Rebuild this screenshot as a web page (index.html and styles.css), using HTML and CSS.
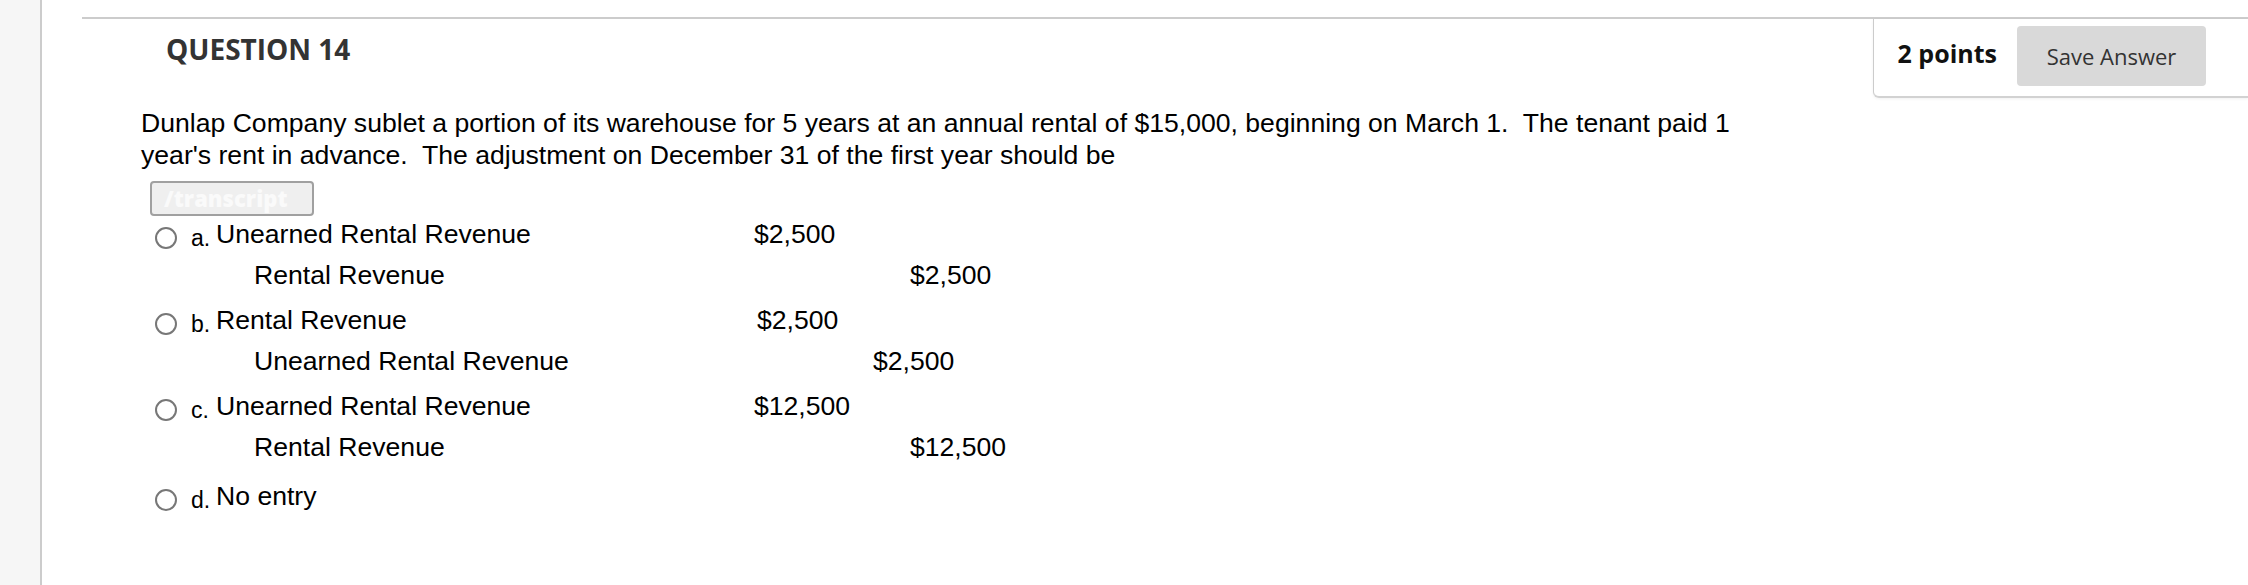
FILE: index.html
```html
<!DOCTYPE html>
<html lang="en">
<head>
<meta charset="utf-8">
<title>Question 14</title>
<link rel="stylesheet" href="styles.css">
</head>
<body>
<div class="page">
  <aside class="sidebar"></aside>
  <main class="main">
    <section class="question">
      <header class="q-head">
        <h2 class="q-title">QUESTION 14</h2>
        <div class="q-meta">
          <span class="points">2 points</span>
          <button class="save" type="button">Save Answer</button>
        </div>
      </header>
      <div class="q-body">
        <p class="q-text">Dunlap Company sublet a portion of its warehouse for 5 years at an annual rental of $15,000, beginning on March 1.&nbsp; The tenant paid 1<br>year's rent in advance.&nbsp; The adjustment on December 31 of the first year should be</p>
        <div class="transcript">/transcript</div>
        <ul class="options">
          <li class="option">
            <span class="radio"></span>
            <span class="letter">a.</span>
            <div class="entry">
              <div class="line dr"><span>Unearned Rental Revenue</span><span>$2,500</span></div>
              <div class="line cr"><span>Rental Revenue</span><span>$2,500</span></div>
            </div>
          </li>
          <li class="option option-b">
            <span class="radio"></span>
            <span class="letter">b.</span>
            <div class="entry">
              <div class="line dr"><span>Rental Revenue</span><span>$2,500</span></div>
              <div class="line cr"><span>Unearned Rental Revenue</span><span>$2,500</span></div>
            </div>
          </li>
          <li class="option">
            <span class="radio"></span>
            <span class="letter">c.</span>
            <div class="entry">
              <div class="line dr"><span>Unearned Rental Revenue</span><span>$12,500</span></div>
              <div class="line cr"><span>Rental Revenue</span><span>$12,500</span></div>
            </div>
          </li>
          <li class="option option-d">
            <span class="radio"></span>
            <span class="letter">d.</span>
            <div class="entry">
              <div class="line"><span>No entry</span></div>
            </div>
          </li>
        </ul>
      </div>
    </section>
  </main>
</div>
</body>
</html>
```

FILE: styles.css
```css
html, body {
  margin: 0;
  padding: 0;
  background: #ffffff;
}

.page {
  display: flex;
  min-height: 585px;
}

.sidebar {
  flex: 0 0 40px;
  background: #f6f6f6;
  border-right: 2px solid #cccccc;
}

.main {
  flex: 1;
  min-width: 0;
}

.question {
  margin: 17px 0 0 40px;
  border-top: 2px solid #cccccc;
}

.q-head {
  display: flex;
  justify-content: space-between;
  align-items: flex-start;
  height: 78px;
}

.q-title {
  margin: 0;
  padding: 11px 0 0 84px;
  font-family: "Open Sans", "Liberation Sans", sans-serif;
  font-weight: 700;
  font-size: 28px;
  line-height: 38px;
  color: #333333;
}

.q-meta {
  box-sizing: border-box;
  height: 79px;
  display: flex;
  align-items: flex-start;
  padding: 7px 42px 0 24px;
  border-left: 1px solid #cccccc;
  border-bottom: 2px solid #d2d2d2;
  border-bottom-left-radius: 6px;
  box-shadow: 0 1px 3px rgba(0, 0, 0, 0.06);
}

.points {
  font-family: "Open Sans", "Liberation Sans", sans-serif;
  font-weight: 700;
  font-size: 25px;
  line-height: 54px;
  color: #111111;
}

.save {
  margin-left: 20px;
  width: 189px;
  height: 60px;
  border: none;
  border-radius: 4px;
  background: #d9d9d9;
  font-family: "Open Sans", "Liberation Sans", sans-serif;
  font-size: 22px;
  color: #333333;
  padding: 0;
}

.q-body {
  padding-left: 59px;
}

.q-text {
  margin: 10px 0 0;
  font-family: "Liberation Sans", Arial, sans-serif;
  font-size: 26.6px;
  line-height: 32px;
  color: #000000;
}

.transcript {
  box-sizing: border-box;
  margin: 10px 0 0 9px;
  width: 164px;
  height: 35px;
  border: 2px solid #a0a0a0;
  border-radius: 4px;
  background: #efefef;
  font-family: "Open Sans", "Liberation Sans", sans-serif;
  font-weight: 800;
  font-size: 22px;
  line-height: 30px;
  padding-left: 12px;
  color: #fafafa;
  white-space: nowrap;
  overflow: hidden;
}

.options {
  list-style: none;
  margin: -2px 0 0 14px;
  padding: 0;
  display: flex;
  flex-direction: column;
  gap: 4px;
}

.option {
  display: flex;
  align-items: flex-start;
}

.option-d {
  margin-top: 4px;
}

.radio {
  flex: none;
  box-sizing: border-box;
  width: 22px;
  height: 22px;
  margin-top: 13px;
  border: 2px solid #777777;
  border-radius: 50%;
  background: #ffffff;
}

.letter {
  flex: none;
  width: 25px;
  margin-left: 14px;
  padding-top: 4px;
  font-family: "Liberation Sans", Arial, sans-serif;
  font-size: 23px;
  line-height: 41px;
  color: #000000;
}

.entry {
  font-family: "Liberation Sans", Arial, sans-serif;
  font-size: 26.6px;
  color: #000000;
}

.line {
  display: grid;
  height: 41px;
  line-height: 41px;
  white-space: nowrap;
}

.line.dr {
  grid-template-columns: 538px auto;
}

.line.cr {
  padding-left: 38px;
  grid-template-columns: 656px auto;
}

.option-b .line.dr {
  grid-template-columns: 541px auto;
}

.option-b .line.cr {
  grid-template-columns: 619px auto;
}
```
